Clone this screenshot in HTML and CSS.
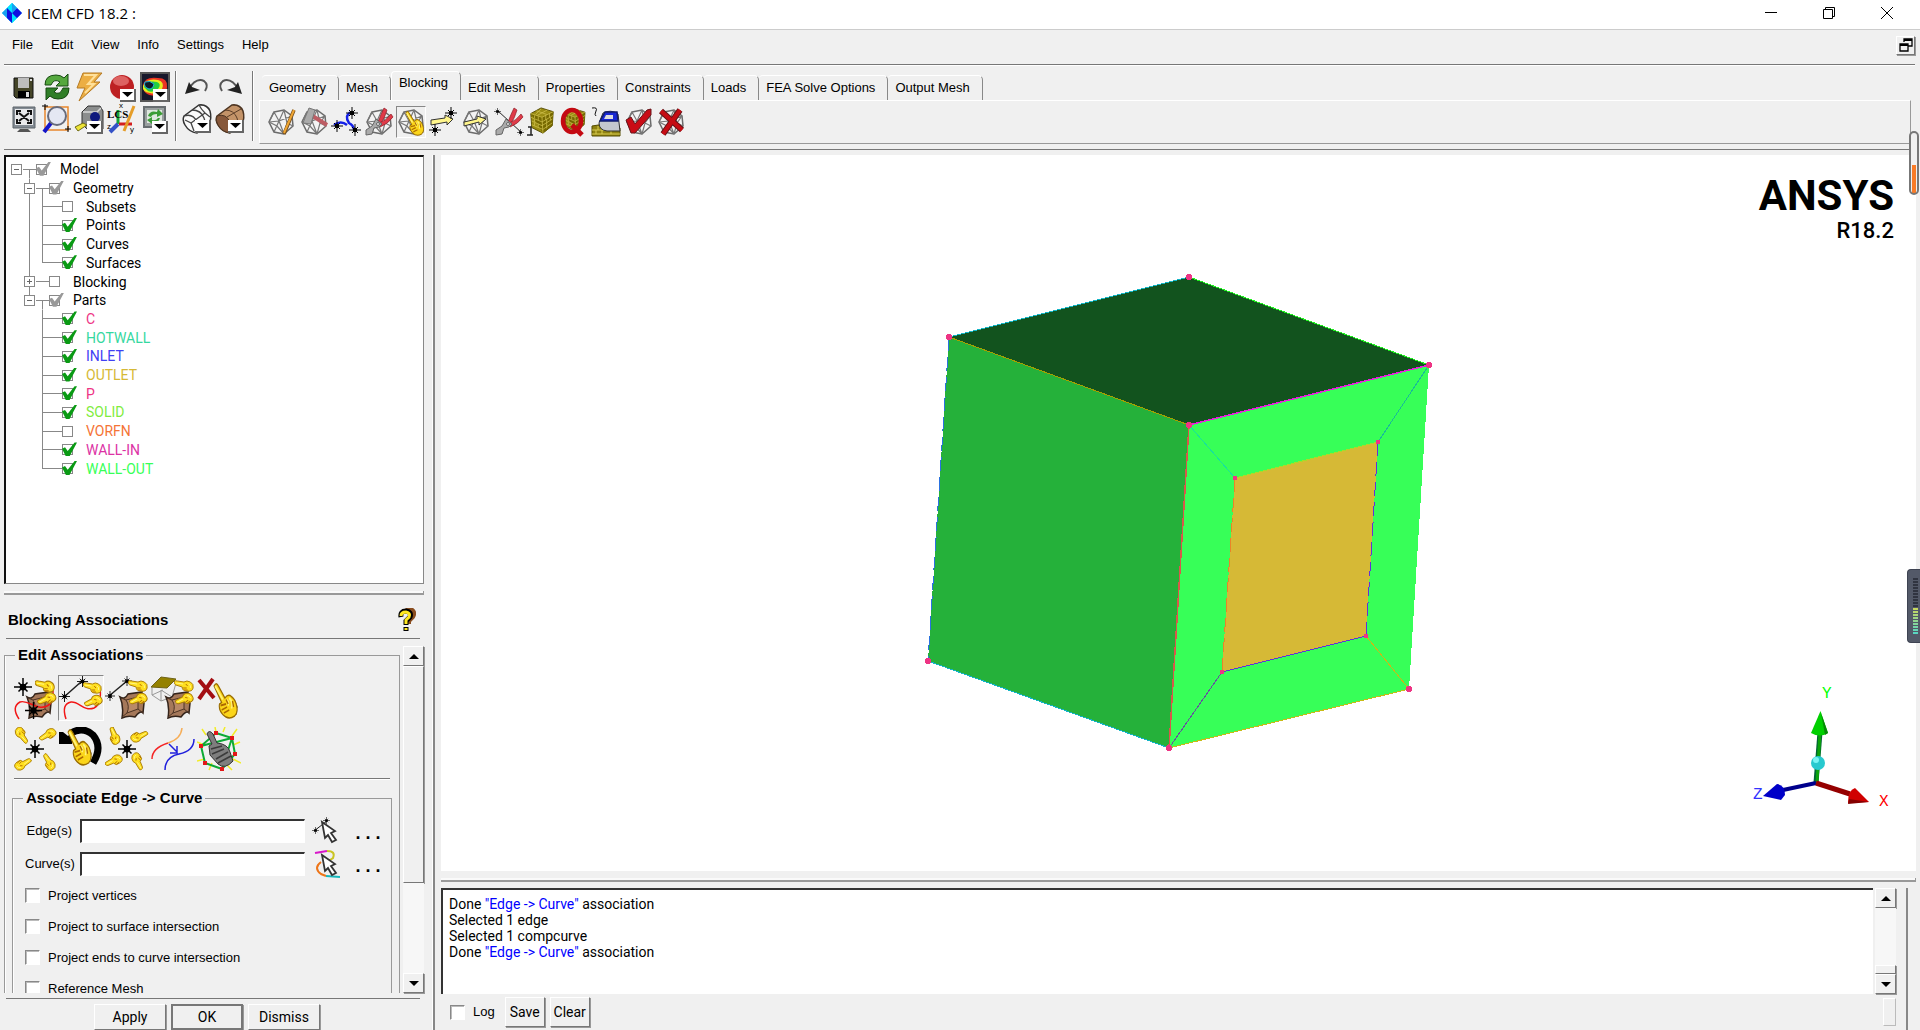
FILE: index.html
```html
<!DOCTYPE html>
<html lang="en">

<head>
	<meta charset="UTF-8">
	<meta name="viewport" content="width=device-width, initial-scale=1.0">
	<title>ICEM CFD 18.2 :</title>
	<link rel="stylesheet" href="styles.css">
</head>

<body>
	<!-- shared icon parts -->
	<svg class="defs" aria-hidden="true">
		<symbol id="ball" viewBox="0 0 30 30">
			<path d="M8 5 18 3 26 9 27 19 18 27 8 25 3 15Z" fill="#f3f3f3" stroke="#6b6b6b" stroke-width="1.5" />
			<path d="M8 5 13 14 18 3M13 14 26 9M13 14 3 15M13 14 8 25M13 14 18 27M18 27 21 16 27 19M21 16 18 3M21 16 26 9M3 15 11 19 18 27M8 5 4 13" fill="none" stroke="#777" stroke-width="1.2" />
		</symbol>
		<symbol id="drop" viewBox="0 0 16 13">
			<path d="M0 0H16V13H0Z" fill="#666" />
			<path d="M0 0H14V11H0Z" fill="#fff" />
			<path d="M2 3H13L7.500 8Z" fill="#000" />
		</symbol>
		<symbol id="star" viewBox="0 0 16 16">
			<path d="M8 0V16M0 8H16M4 4 12 12M12 4 4 12" stroke="#000" stroke-width="1.3" />
			<circle cx="8" cy="8" r="3" />
		</symbol>
		<symbol id="hand" viewBox="0 0 24 24" preserveAspectRatio="none">
			<path d="M9 22 22 21 23 16 20 11 23 18Z" fill="#77705c" />
			<path d="M1 2Q3-1 5 2L11 10Q14 7 17 9Q21 11 22 16Q23 20 20 22Q14 25 9 21Q5 18 6 14L8 13Z" fill="#fbd51a" stroke="#9a6d00" stroke-width="1" />
			<path d="M2 2 9 11M12 11Q15 12 14 15M15 10Q19 13 17 17" fill="none" stroke="#fff27a" stroke-width="1.500" />
			<path d="M7 15 12 14M8 18 13 16M10 20 15 18M12 11 14 14M18 12 19 16" fill="none" stroke="#ad6a00" stroke-width="1.200" />
		</symbol>
		<symbol id="point-left" viewBox="0 0 22 12" preserveAspectRatio="none">
			<path d="M0 2Q1 0 4 1L11 2Q14 0 18 2Q22 4 21 8Q20 12 14 11Q9 11 9 7L2 5Q0 4 0 2Z" fill="#ffdf1e" stroke="#a87a08" />
			<path d="M10 8H14M11 10H15M13 4 15 6" stroke="#b36d00" />
			<path d="M2 3 10 4M16 4Q19 5 18 8" fill="none" stroke="#fff58a" />
		</symbol>
		<symbol id="sheet" viewBox="0 0 28 28">
			<path d="M2 6Q7 9 10 3L24 1Q22 9 26 12L25 22Q22 19 17 26Q10 24 4 27Q6 15 2 6Z" fill="#a5785a" stroke="#33231a" stroke-width="1.500" />
			<path d="M8 9 20 6 20 18 9 22Q12 15 8 9ZM8 9 3 7M20 6 24 2M20 18 25 22M9 22 4 26" fill="#b88968" stroke="#4c3425" />
		</symbol>
		<symbol id="pliers" viewBox="0 0 30 30">
			<path d="M14 15Q17 7 20 1L23 3Q21 10 17 17" fill="#e03a48" stroke="#8b2028" stroke-width=".7" />
			<path d="M15 16Q22 14 27 7L29 10Q24 17 16 20" fill="#e03a48" stroke="#8b2028" stroke-width=".7" />
			<path d="M12 12 18 17 15 20 10 21 8 27 2 28 2 23 8 19Z" fill="#aaa" stroke="#666" />
			<circle cx="14" cy="17" r="1.500" fill="#eee" stroke="#666" />
		</symbol>
		<symbol id="bricks" viewBox="0 0 30 30">
			<path d="M3 7 14 1 27 5 26 20 16 28 4 22Z" fill="#9a8c13" stroke="#544a00" />
			<path d="M3 7 15 11 27 5 26 20 16 28Z" fill="#766900" />
			<path d="M3 7 15 11 27 5M15 11 16 28M3 11 15 16 27 9M4 15 15 20 26 13M4 19 16 24 26 17M7 9V12M11 10V14M7 13V16M11 18V21M7 17V20M19 9V14M23 7V11M20 13V18M24 11V14M20 18V23M9 4 20 8M14 2 8 8M21 3 10 9" fill="none" stroke="#cfc04d" stroke-width=".8" />
		</symbol>
		<symbol id="cursor" viewBox="0 0 18 24">
			<path d="M2 2 15 11 11 13 16 20 12 22 8 15 5 18Z" fill="#fff" stroke="#333" stroke-width="1.800" />
		</symbol>
	</svg>

	<header class="titlebar">
		<svg class="app-logo" width="20" height="20" viewBox="0 0 20 20">
			<path d="M10 0 20 10 10 20 0 10Z" fill="#00c8f0" />
			<path d="M10 0 15 5 10 10 5 5ZM10 10 15 15 10 20 5 15Z" fill="#00e4ff" />
			<path d="M5 5 10 10 5 15ZM15 5 20 10 15 15 10 10ZM10 10 5 15 10 20Z" fill="#1010e0" />
			<path d="M5 5 0 10 5 15ZM15 5 10 0V10Z" fill="#18a0f0" />
		</svg>
		<h1>ICEM CFD 18.2 :</h1>
		<div class="window-buttons">
			<button aria-label="Minimize"><svg width="12" height="12" viewBox="0 0 12 12"><path d="M0 5.500H12" /></svg></button>
			<button aria-label="Restore"><svg width="12" height="12" viewBox="0 0 12 12"><path d="M.5 2.500H9.500V11.500H.5ZM2.500 2.500V.5H11.500V9.500H9.500" /></svg></button>
			<button aria-label="Close"><svg width="12" height="12" viewBox="0 0 12 12"><path d="M0 0 12 12M12 0 0 12" /></svg></button>
		</div>
	</header>

	<nav class="menubar">
		<a href="#">File</a>
		<a href="#">Edit</a>
		<a href="#">View</a>
		<a href="#">Info</a>
		<a href="#">Settings</a>
		<a href="#">Help</a>
		<button class="mdi-button raised" aria-label="Restore view">
			<svg width="14" height="14" viewBox="0 0 14 14"><path d="M5 4V1H13V8H9M1 6H9V13H1Z" fill="none" stroke="#000" stroke-width="1.300" /><path d="M5 2H13M1 7H9" stroke="#000" stroke-width="2" /></svg>
		</button>
	</nav>

	<div class="toolbar">
		<div class="tool-grid five">
			<button aria-label="Save project"><svg viewBox="0 0 30 30"><path d="M5 6H24V26H7L5 24Z" fill="#454528" stroke="#111" /><path d="M9 6H20V16H9Z" fill="#bdbdbd" /><path d="M9 19H21V26H9Z" fill="#000" /><path d="M17 20H20V25H17ZM21 7H23V9H21Z" fill="#ddd" /></svg></button>
			<button aria-label="Update"><svg viewBox="0 0 30 30"><path d="M3 13Q3 3 14 3Q19 3 22 6L26 2V14H14L18 10Q12 6 9 13Z" fill="#55a83e" stroke="#174a12" /><path d="M27 16Q27 27 16 27Q11 27 8 24L4 28V16H16L12 20Q18 24 21 16Z" fill="#2f7e27" stroke="#174a12" /></svg></button>
			<button aria-label="Run"><svg viewBox="0 0 30 30"><path d="M9 1H28L20 10H26L5 29L11 16H3Z" fill="#ecae43" stroke="#b57a24" /><path d="M10 3H22L14 12H20L11 21" fill="none" stroke="#ffe09a" stroke-width="2" /></svg></button>
			<button aria-label="Stop"><svg viewBox="0 0 30 30"><circle cx="15" cy="15" r="12" fill="#bd2023" /><ellipse cx="14" cy="9" rx="8" ry="5" fill="#dd6262" /><use href="#drop" x="13" y="17" width="16" height="13" /></svg></button>
			<button aria-label="Contours"><svg viewBox="0 0 30 30"><path d="M1 1H29V29H1Z" fill="#17172b" stroke="#555" stroke-width="2" /><path d="M3 13Q5 4 18 6Q28 6 27 15Q27 26 15 24Q2 23 3 13Z" fill="#ed3424" /><path d="M3 14Q6 6 18 8Q25 10 22 17Q18 23 10 21Q2 20 3 14Z" fill="#e6ec20" /><path d="M4 15Q7 8 17 10Q22 12 18 17Q13 21 8 19Z" fill="#22cf42" /><path d="M5 10Q10 8 14 12Q13 17 9 17Q3 15 5 10Z" fill="#0c1c28" stroke="#20aee0" /><use href="#drop" x="13" y="17" width="16" height="13" /></svg></button>
			<button aria-label="Fit window"><svg viewBox="0 0 30 30"><path d="M4 3H26V24H4Z" fill="#838b93" stroke="#5d646b" /><path d="M6 5H24V21H6Z" fill="#e9eaec" /><path d="M10 9 20 17M20 9 10 17M8 11V7H12M18 7H22V11M22 15V19H18M12 19H8V15" fill="none" stroke="#111" stroke-width="2" /><path d="M11 25H19L22 28H8Z" fill="#555" /></svg></button>
			<button aria-label="Box zoom"><svg viewBox="0 0 30 30"><path d="M3 3H26V26H3Z" fill="none" stroke="#e8862c" stroke-width="1.500" /><path d="M9 19 2 28" stroke="#1414c8" stroke-width="4" /><circle cx="15" cy="12" r="9" fill="#e4e7f3" stroke="#676b7b" stroke-width="2" /><path d="M0 2H6M3 0V6M23 25H29M26 22V28" stroke="#000" /></svg></button>
			<button aria-label="Measure distance"><svg viewBox="0 0 30 30"><path d="M8 8 14 2H26L29 7V25H13L8 20Z" fill="#8b8d8d" stroke="#333" /><path d="M9 8H23L27 4M23 8V24" fill="none" stroke="#d7d7d7" stroke-width="1.500" /><circle cx="21" cy="13" r="5" fill="#0f197d" /><path d="M1 23 9 19 13 21 4 27Z" fill="#eee536" stroke="#6f6a13" /><use href="#drop" x="13" y="17" width="16" height="13" /></svg></button>
			<button aria-label="Local coordinate systems"><svg viewBox="0 0 30 30"><path d="M11 20V6" stroke="#14a535" stroke-width="3" /><path d="M11 20 3 28" stroke="#3452c7" stroke-width="4" /><path d="M12 20H25" stroke="#d31f1f" stroke-width="3" /><path d="M27 2 17 27" stroke="#e59d28" stroke-width="3" /><text class="lcs" x="0" y="14">LCS</text><text class="axis-mini" x="12" y="4">x</text><text class="axis-mini" x="0" y="25">z</text><text class="axis-mini" x="23" y="28">y</text></svg></button>
			<button aria-label="Refresh view"><svg viewBox="0 0 30 30"><path d="M4 3H25V23H4Z" fill="#9aa0a0" stroke="#676d70" stroke-width="2" /><path d="M7 6H22V19H7Z" fill="#dfe8df" /><path d="M8 12Q10 6 17 8L18 5 23 10 17 13V10Q12 10 11 13ZM20 14Q18 20 12 18V20L7 16 12 13V16Q16 17 18 14Z" fill="#3b9d36" /><use href="#drop" x="12" y="17" width="16" height="13" /></svg></button>
		</div>
		<div class="vline"></div>
		<div class="tool-grid two">
			<button aria-label="Undo"><svg viewBox="0 0 30 30"><path d="M6 18Q14 5 22 9Q27 13 23 19" fill="none" stroke="#555" stroke-width="2" /><path d="M3 22 7 10 10 15 18 18Z" fill="#222" /></svg></button>
			<button aria-label="Redo"><svg viewBox="0 0 30 30"><path d="M24 18Q16 5 8 9Q3 13 7 19" fill="none" stroke="#555" stroke-width="2" /><path d="M27 22 23 10 20 15 12 18Z" fill="#222" /></svg></button>
			<button aria-label="Wireframe"><svg viewBox="0 0 30 30"><path d="M2 12 17 1Q25 0 28 7Q30 14 27 20L15 29Q7 28 3 21Q0 16 2 12Z" fill="#fafafa" stroke="#333" stroke-width="1.500" /><path d="M2 12Q11 9 15 18Q18 24 15 29M10 6Q19 6 22 14Q24 19 22 23M9 19 23 9M17 1Q19 5 23 9L28 13M3 16 9 19 12 27" fill="none" stroke="#444" stroke-width="1.300" /><use href="#drop" x="13" y="16" width="16" height="13" /></svg></button>
			<button aria-label="Solid"><svg viewBox="0 0 30 30"><path d="M2 12 17 1Q25 0 28 7Q30 14 27 20L15 29Q7 28 3 21Q0 16 2 12Z" fill="#c39368" stroke="#4c3421" stroke-width="1.500" /><path d="M2 12Q11 9 15 18Q18 24 15 29Q7 28 3 21Q0 16 2 12Z" fill="#87583a" stroke="#4c3421" /><path d="M10 6Q19 6 22 14L23 18M12 13 26 5" fill="none" stroke="#5b3d27" /><use href="#drop" x="13" y="16" width="16" height="13" /></svg></button>
		</div>
		<div class="vline"></div>
		<div class="notebook">
			<div class="tabs">
				<button>Geometry</button>
				<button>Mesh</button>
				<button class="active">Blocking</button>
				<button>Edit Mesh</button>
				<button>Properties</button>
				<button>Constraints</button>
				<button>Loads</button>
				<button>FEA Solve Options</button>
				<button>Output Mesh</button>
			</div>
			<div class="tab-page">
				<div class="page-tools">
					<button aria-label="Create block"><svg viewBox="0 0 30 30"><use href="#ball" width="30" height="30" /><path d="M28 3 18 27" stroke="#77501f" stroke-width="3.500" /><path d="M28 3 18 26" stroke="#f0a633" stroke-width="2" /></svg></button>
					<button aria-label="Split block"><svg viewBox="0 0 30 30"><use href="#ball" width="30" height="30" /><path d="M12 8 28 18" stroke="#bd5d64" stroke-width="4" /><path d="M10 1 16 3 12 17 4 16Z" fill="#aaa" stroke="#777" /></svg></button>
					<button aria-label="Merge vertices"><svg viewBox="0 0 30 30"><path d="M20 5Q13 9 18 16Q22 18 23 22M3 18Q10 13 16 18" fill="none" stroke="#1420e8" stroke-width="2.500" /><use href="#star" x="15" y="0" width="12" height="12" /><use href="#star" x="0" y="13" width="12" height="12" /><use href="#star" x="18" y="17" width="12" height="12" /></svg></button>
					<button aria-label="Edit block"><svg viewBox="0 0 30 30"><use href="#ball" width="30" height="30" /><use href="#pliers" width="30" height="30" /></svg></button>
					<button class="pressed" aria-label="Associate"><svg viewBox="0 0 30 30"><use href="#ball" width="30" height="30" /><use href="#hand" x="9" y="4" width="20" height="25" /></svg></button>
					<button aria-label="Move vertex"><svg viewBox="0 0 30 30"><path d="M2 13 16 11V8L24 12 18 18V15L2 18Z" fill="#fff58b" stroke="#333" /><use href="#star" x="16" y="0" width="12" height="12" /><use href="#star" x="0" y="17" width="12" height="12" /></svg></button>
					<button aria-label="Transform blocks"><svg viewBox="0 0 30 30"><use href="#ball" width="30" height="30" /><path d="M3 15 16 12V9L25 12 18 18V15L3 19Z" fill="#fff58b" stroke="#333" /></svg></button>
					<button aria-label="Edit edge"><svg viewBox="0 0 30 30"><path d="M4 4 28 26" stroke="#222" /><use href="#star" x="0" y="1" width="7" height="7" /><use href="#star" x="23" y="22" width="7" height="7" /><use href="#pliers" width="30" height="30" /></svg></button>
					<button aria-label="Pre-mesh params"><svg viewBox="0 0 30 30"><use href="#bricks" x="2" width="28" height="28" /><path d="M2 20H5V28M1 28H7" fill="none" stroke="#222" stroke-width="1.500" /></svg></button>
					<button aria-label="Pre-mesh quality"><svg viewBox="0 0 30 30"><use href="#bricks" x="3" y="1" width="26" height="25" /><ellipse cx="13" cy="14" rx="9" ry="11" fill="none" stroke="#c40912" stroke-width="4.500" /><path d="M13 18 23 28" stroke="#c40912" stroke-width="5" /></svg></button>
					<button aria-label="Pre-mesh smooth"><svg viewBox="0 0 30 30"><path d="M1 19 20 16 29 21V29H1Z" fill="#8f8210" stroke="#554c00" /><path d="M1 23H29M1 27H29M7 19V23M14 19V23M11 23V27M20 23V27M5 23V27" stroke="#d7ca51" /><path d="M8 16 12 6Q20 2 27 7L29 24H16Q8 23 8 16Z" fill="#c4c7ce" stroke="#333" /><path d="M9 14 14 5H26L27 14Z" fill="#1928d4" stroke="#111b6c" stroke-width="1.500" /><path d="M15 8H22V12H13Z" fill="#ddd" /><path d="M1 1Q7 0 5 4T5 9" fill="none" stroke="#111" /></svg></button>
					<button aria-label="Check blocks"><svg viewBox="0 0 30 30"><use href="#ball" width="30" height="30" /><path d="M2 13 7 10 11 17 23 3 27 2V8L11 26H7Z" fill="#c90c16" stroke="#66151a" /></svg></button>
					<button aria-label="Delete block"><svg viewBox="0 0 30 30"><use href="#ball" width="30" height="30" /><path d="M5 4 26 23M24 3 7 27" stroke="#641419" stroke-width="6" /><path d="M5 4 26 23M24 3 7 27" stroke="#c60c14" stroke-width="4" /></svg></button>
				</div>
			</div>
		</div>
	</div>

	<main class="workspace">
		<aside class="side">
			<div class="tree-box">
				<ul class="tree">
					<li><i><button class="exp" aria-label="Collapse Model"></button></i><i class="down"></i><input type="checkbox" class="partial" id="t0" checked><label for="t0">Model</label></li>
					<li><i></i><i class="v"><button class="exp" aria-label="Collapse Geometry"></button></i><i class="down"></i><input type="checkbox" class="partial" id="t1" checked><label for="t1">Geometry</label></li>
					<li><i></i><i class="v"></i><i class="tee"></i><i class="h"></i><input type="checkbox" id="t2"><label for="t2">Subsets</label></li>
					<li><i></i><i class="v"></i><i class="tee"></i><i class="h"></i><input type="checkbox" id="t3" checked><label for="t3">Points</label></li>
					<li><i></i><i class="v"></i><i class="tee"></i><i class="h"></i><input type="checkbox" id="t4" checked><label for="t4">Curves</label></li>
					<li><i></i><i class="v"></i><i class="end"></i><i class="h"></i><input type="checkbox" id="t5" checked><label for="t5">Surfaces</label></li>
					<li><i></i><i class="v"><button class="exp plus" aria-label="Expand Blocking"></button></i><i class="h"></i><input type="checkbox" id="t6"><label for="t6">Blocking</label></li>
					<li><i></i><i class="up"><button class="exp" aria-label="Collapse Parts"></button></i><i class="down"></i><input type="checkbox" class="partial" id="t7" checked><label for="t7">Parts</label></li>
					<li><i></i><i></i><i class="tee"></i><i class="h"></i><input type="checkbox" id="p0" checked><label for="p0" class="pink">C</label></li>
					<li><i></i><i></i><i class="tee"></i><i class="h"></i><input type="checkbox" id="p1" checked><label for="p1" class="teal">HOTWALL</label></li>
					<li><i></i><i></i><i class="tee"></i><i class="h"></i><input type="checkbox" id="p2" checked><label for="p2" class="blue">INLET</label></li>
					<li><i></i><i></i><i class="tee"></i><i class="h"></i><input type="checkbox" id="p3" checked><label for="p3" class="gold">OUTLET</label></li>
					<li><i></i><i></i><i class="tee"></i><i class="h"></i><input type="checkbox" id="p4" checked><label for="p4" class="pink">P</label></li>
					<li><i></i><i></i><i class="tee"></i><i class="h"></i><input type="checkbox" id="p5" checked><label for="p5" class="lime">SOLID</label></li>
					<li><i></i><i></i><i class="tee"></i><i class="h"></i><input type="checkbox" id="p6"><label for="p6" class="orange">VORFN</label></li>
					<li><i></i><i></i><i class="tee"></i><i class="h"></i><input type="checkbox" id="p7" checked><label for="p7" class="magenta">WALL-IN</label></li>
					<li><i></i><i></i><i class="end"></i><i class="h"></i><input type="checkbox" id="p8" checked><label for="p8" class="green">WALL-OUT</label></li>
				</ul>
			</div>
			<div class="sash"></div>
			<section class="options">
				<header class="options-head">
					<h2>Blocking Associations</h2>
					<button aria-label="Help"><svg width="18" height="24" viewBox="0 0 18 24"><path d="M6 5Q8 1 13 1Q18 4 15 9L11 13V16" fill="none" stroke="#8a4d20" stroke-width="4" /><path d="M3 9Q2 3 8 3Q14 4 12 9L8 13V17M8 19V23" fill="none" stroke="#000" stroke-width="5" /><path d="M3 8Q3 4 8 4Q13 5 11 9L8 12V16M8 20V22" fill="none" stroke="#ffe820" stroke-width="3" /></svg></button>
				</header>
				<div class="options-scroll">
					<div class="options-body">
						<fieldset class="outer">
							<legend>Edit Associations</legend>
							<div class="assoc-grid">
								<button aria-label="Associate vertex"><svg viewBox="0 0 44 44"><use href="#sheet" x="12" y="15" width="28" height="28" /><path d="M6 43Q-2 31 7 26C15 23 24 35 34 30Q41 27 40 15" fill="none" stroke="#f21616" stroke-width="1.500" /><use href="#star" x="1" y="2" width="18" height="18" /><use href="#star" x="12" y="26" width="17" height="17" /><use href="#point-left" x="22" y="4" width="20" height="13" /><use href="#point-left" x="25" y="18" width="19" height="12" transform="rotate(-38 34 24)" /></svg></button>
								<button class="pressed" aria-label="Associate edge to curve"><svg viewBox="0 0 44 44"><path d="M5 21 23 5" stroke="#222" stroke-width="1.500" /><path d="M7 43Q2 28 12 26C20 25 25 36 35 32Q43 28 41 12" fill="none" stroke="#f21616" stroke-width="1.500" /><use href="#star" x="0" y="15" width="11" height="11" /><use href="#star" x="18" y="0" width="11" height="11" /><use href="#point-left" x="24" y="6" width="19" height="12" /><use href="#point-left" x="26" y="20" width="18" height="12" transform="rotate(-38 35 26)" /></svg></button>
								<button aria-label="Associate edge to surface"><svg viewBox="0 0 44 44"><path d="M4 20 22 5" stroke="#222" stroke-width="1.500" /><use href="#sheet" x="13" y="15" width="28" height="28" /><use href="#star" x="0" y="15" width="10" height="10" /><use href="#star" x="17" y="0" width="10" height="10" /><use href="#point-left" x="23" y="4" width="20" height="12" /><use href="#point-left" x="25" y="18" width="18" height="12" transform="rotate(-38 34 24)" /></svg></button>
								<button aria-label="Associate face to surface"><svg viewBox="0 0 44 44"><path d="M1 11V19L10 25 21 21 25 7M10 25V14L21 21M1 19 12 14" fill="none" stroke="#999" /><path d="M0 11 10 1 25 3 16 12Z" fill="#948100" stroke="#6f6317" /><use href="#sheet" x="13" y="15" width="28" height="28" /><use href="#point-left" x="23" y="4" width="20" height="12" /><use href="#point-left" x="25" y="18" width="18" height="12" transform="rotate(-38 34 24)" /></svg></button>
								<button aria-label="Disassociate"><svg viewBox="0 0 44 44"><path d="M2 4 17 22M16 3 2 23" stroke="#a30e12" stroke-width="4" /><use href="#hand" x="16" y="7" width="26" height="36" /></svg></button>
								<button aria-label="Update associations"><svg viewBox="0 0 44 44"><use href="#star" x="13" y="13" width="18" height="18" /><use href="#point-left" x="26" y="30" width="18" height="11" transform="rotate(45 35 36)" /><use href="#point-left" x="26" y="3" width="18" height="11" transform="rotate(-45 35 8)" /><use href="#point-left" x="0" y="3" width="18" height="11" transform="rotate(-140 9 8)" /><use href="#point-left" x="0" y="30" width="18" height="11" transform="rotate(135 9 36)" /></svg></button>
								<button aria-label="Reset association"><svg viewBox="0 0 44 44"><path d="M12 6Q24-1 34 8Q44 20 34 36" fill="none" stroke="#000" stroke-width="7" /><path d="M0 5H4L9 9 13 5V17H0Z" /><use href="#hand" x="8" y="2" width="26" height="37" /></svg></button>
								<button aria-label="Snap project vertices"><svg viewBox="0 0 44 44"><use href="#star" x="13" y="13" width="18" height="18" /><use href="#point-left" x="0" y="4" width="18" height="11" transform="rotate(55 9 9)" /><use href="#point-left" x="25" y="4" width="18" height="11" transform="rotate(140 34 9)" /><use href="#point-left" x="0" y="29" width="18" height="11" transform="rotate(-40 9 34)" /><use href="#point-left" x="24" y="29" width="18" height="11" transform="rotate(-130 33 34)" /></svg></button>
								<button aria-label="Group curves"><svg viewBox="0 0 44 44"><path d="M1 32Q1 21 17 16" fill="none" stroke="#f42525" stroke-width="1.500" /><path d="M17 16Q30 12 31 1" fill="none" stroke="#f6ae58" stroke-width="1.500" /><path d="M14 43Q14 30 28 27Q43 24 43 12M18 17 26 25M26 19V26H19" fill="none" stroke="#2020dc" stroke-width="1.500" /></svg></button>
								<button aria-label="Auto association"><svg viewBox="0 0 44 44"><path d="M5 2 9 8M18 0 19 5M28 0 26 5M40 2 35 9M43 15 36 18M44 36 36 32M35 43 30 38M12 43 15 36M0 34 8 32M0 15 7 18" stroke="#f2ed27" stroke-width="1.500" /><path d="M19 6 35 11 38 27 25 42 8 36 4 19ZM4 19 35 11 25 42" fill="none" stroke="#0caa35" stroke-width="2" /><path d="M10 7Q12 2 16 7L20 16Q31 17 33 25L36 34Q28 43 21 37L13 28 12 19 15 17Z" fill="#7e7e7e" stroke="#333" /><path d="M14 22 25 19M15 27 27 22M19 32 31 25M21 36 34 29" stroke="#3b3b3b" stroke-width="1.500" /><path d="M17 4H21V8H17ZM33 9H37V13H33ZM2 17H6V21H2ZM36 25H40V29H36ZM23 40H27V44H23ZM6 34H10V38H6Z" fill="#e31818" /></svg></button>
							</div>
							<hr>
							<fieldset class="inner">
								<legend>Associate Edge -&gt; Curve</legend>
								<div class="field">
									<label for="edges">Edge(s)</label>
									<input type="text" id="edges">
									<button class="pick" aria-label="Select edges"><svg width="28" height="30" viewBox="0 0 28 30"><path d="M2 15 15 5" stroke="#222" /><use href="#star" x="0" y="11" width="7" height="7" /><use href="#star" x="11" y="1" width="7" height="7" /><use href="#cursor" x="8" y="4" width="18" height="24" /></svg></button>
									<button class="more" aria-label="More edges">. . .</button>
								</div>
								<div class="field">
									<label for="curves">Curve(s)</label>
									<input type="text" id="curves">
									<button class="pick" aria-label="Select curves"><svg width="28" height="30" viewBox="0 0 28 30"><path d="M3 4 15 2" stroke="#d818c9" stroke-width="2" /><path d="M15 2Q24 2 21 9L15 13" fill="none" stroke="#cac423" stroke-width="2" /><path d="M9 13Q1 19 9 25L14 27" fill="none" stroke="#ed7519" stroke-width="2" /><path d="M14 27 28 28" stroke="#16b8bc" stroke-width="2" /><use href="#cursor" x="8" y="4" width="18" height="24" /></svg></button>
									<button class="more" aria-label="More curves">. . .</button>
								</div>
								<label class="check"><input type="checkbox">Project vertices</label>
								<label class="check"><input type="checkbox">Project to surface intersection</label>
								<label class="check"><input type="checkbox">Project ends to curve intersection</label>
								<label class="check"><input type="checkbox">Reference Mesh</label>
							</fieldset>
						</fieldset>
					</div>
					<div class="scrollbar">
						<button class="arrow raised up" aria-label="Scroll up"></button>
						<div class="thumb raised"></div>
						<div class="trough"></div>
						<button class="arrow raised" aria-label="Scroll down"></button>
					</div>
				</div>
				<footer class="actions">
					<button class="raised">Apply</button>
					<button class="raised default">OK</button>
					<button class="raised">Dismiss</button>
				</footer>
			</section>
		</aside>
		<div class="split"></div>
		<section class="main">
			<div class="viewport">
				<svg class="model" width="514" height="486" viewBox="922 270 514 486" shape-rendering="crispEdges">
					<path d="M949 337 1189 277 1429 365 1189 425Z" fill="#12531e" />
					<path d="M949 337 1189 425 1169 748 928 661Z" fill="#25b13a" />
					<path d="M1189 425 1429 365 1409 689 1169 748Z" fill="#37ff58" />
					<path d="M1235 478 1378 442 1366 636 1222 672Z" fill="#d6b936" />
					<g fill="none" stroke-width="1">
						<path d="M949 337 1189 277M928 661 1169 748" stroke="#13b5c5" />
						<path d="M1189 277 1429 365" stroke="#20ee20" />
						<path d="M949 337 1189 425" stroke="#a4a000" />
						<path d="M1189 425 1429 365" stroke="#e81ee0" stroke-width="1.500" />
						<path d="M949 337 928 661" stroke="#2a72e0" stroke-dasharray="14 6" />
						<path d="M1189 425 1169 748" stroke="#d8584a" stroke-width="1.500" />
						<path d="M1169 748 1409 689M1366 636 1409 689" stroke="#c8bb16" />
						<path d="M1189 425 1235 478" stroke="#18e39a" />
						<path d="M1429 365 1378 442" stroke="#17bc98" />
						<path d="M1235 478 1378 442" stroke="#a9dc28" />
						<path d="M1235 478 1222 672" stroke="#ec8228" stroke-dasharray="14 6" />
						<path d="M1378 442 1366 636" stroke="#6330d8" stroke-dasharray="14 6" />
						<path d="M1366 636 1222 672" stroke="#6330d8" />
						<path d="M1222 672 1169 748" stroke="#6550a0" />
					</g>
					<g fill="#ee3484">
						<circle cx="1189" cy="277" r="3" /><circle cx="949" cy="337" r="3" />
						<circle cx="1189" cy="425" r="3" /><circle cx="1429" cy="365" r="3" />
						<circle cx="928" cy="661" r="3" /><circle cx="1169" cy="748" r="3" />
						<circle cx="1409" cy="689" r="3" /><circle cx="1235" cy="478" r="2.500" />
						<circle cx="1378" cy="442" r="2.500" /><circle cx="1366" cy="636" r="2.500" />
						<circle cx="1222" cy="672" r="2.500" />
					</g>
				</svg>
				<div class="brand">
					<strong>ANSYS</strong>
					<span>R18.2</span>
				</div>
				<svg class="triad" width="146" height="132" viewBox="1750 680 146 132">
					<path d="M1816 783 1820 732" stroke="#063" stroke-width="5" />
					<path d="M1817 783 1820 732" stroke="#0ba30b" stroke-width="3" />
					<path d="M1820.500 711 1828 733Q1820 738 1811 733Z" fill="#00d000" />
					<path d="M1821 713 1825 735 1828 733Z" fill="#088908" />
					<path d="M1816 783 1783 790" stroke="#00008c" stroke-width="4" />
					<path d="M1763 796 1777 784Q1785 785 1785 795L1781 800Z" fill="#0000c8" />
					<path d="M1816 783 1850 794" stroke="#950000" stroke-width="5" />
					<path d="M1869 802 1855 788Q1848 790 1848 803Z" fill="#d00000" />
					<path d="M1869 802 1848 804 1849 799Z" fill="#850000" />
					<circle cx="1818" cy="763" r="7" fill="#28c9cf" />
					<circle cx="1816" cy="760" r="3" fill="#79f4f4" />
					<text x="1822" y="698" fill="#0f0">Y</text>
					<text x="1753" y="799" fill="#33f">Z</text>
					<text x="1879" y="806" fill="#f00">X</text>
				</svg>
			</div>
			<div class="sash"></div>
			<div class="messages">
				<div class="message-col">
					<div class="log">
						<p>Done <span>"Edge -&gt; Curve"</span> association</p>
						<p>Selected 1 edge</p>
						<p>Selected 1 compcurve</p>
						<p>Done <span>"Edge -&gt; Curve"</span> association</p>
					</div>
					<div class="scrollbar">
						<button class="arrow raised up" aria-label="Scroll log up"></button>
						<div class="trough"></div>
						<div class="thumb raised"></div>
						<button class="arrow raised" aria-label="Scroll log down"></button>
					</div>
				</div>
				<div class="log-actions">
					<label class="check"><input type="checkbox">Log</label>
					<button class="raised">Save</button>
					<button class="raised">Clear</button>
					<div class="grip"></div>
				</div>
			</div>
		</section>
	</main>

	<div class="gauge"></div>
	<div class="meter"></div>
</body>

</html>
```

FILE: styles.css
```css
* {
	box-sizing: border-box;
}

body {
	display: flex;
	flex-direction: column;
	height: 100vh;
	margin: 0;
	overflow: hidden;
	background-color: #f0f0f0;
	color: #000;
	font: 14px/18px Roboto, "Liberation Sans", sans-serif;
}

button {
	display: flex;
	align-items: center;
	justify-content: center;
	padding: 0;
	border: 0;
	background: none;
	color: inherit;
	font: inherit;
}

h1,
h2,
p,
ul {
	margin: 0;
	padding: 0;
	font-weight: normal;
}

.defs {
	position: absolute;
	width: 0;
	height: 0;
}

.raised {
	border: 1px solid;
	border-color: #fff #777 #777 #fff;
	box-shadow: 1px 1px 0 #999;
}

/* title bar and menu */

.titlebar {
	display: flex;
	align-items: center;
	flex: none;
	height: 30px;
	padding: 0 4px 3px 2px;
	border-bottom: 1px solid #ccc;
	background-color: #fff;
}

.titlebar h1 {
	margin-left: 5px;
	font: 15px/20px "Open Sans", sans-serif;
}

.window-buttons {
	display: flex;
	margin-left: auto;
}

.window-buttons button {
	width: 58px;
	height: 26px;
}

.window-buttons path {
	fill: none;
	stroke: #000;
}

.menubar {
	display: flex;
	align-items: center;
	flex: none;
	gap: 18px;
	height: 35px;
	margin: 0 5px 0 4px;
	padding: 0 0 4px 8px;
	border-bottom: 1px solid #777;
	box-shadow: 0 1px 0 #fff;
	font: 13px/18px "Liberation Sans", sans-serif;
}

.menubar a {
	color: inherit;
	text-decoration: none;
}

.mdi-button {
	width: 19px;
	height: 19px;
	margin-left: auto;
}

/* toolbar */

.toolbar {
	display: flex;
	flex: none;
	height: 85px;
	margin: 0 5px 0 4px;
	padding: 6px 4px 0;
	border-bottom: 1px solid #777;
}

.tool-grid {
	display: grid;
	grid-auto-rows: 32px;
}

.tool-grid.five {
	grid-template-columns: repeat(5, 1fr);
	width: 163px;
	margin-right: 4px;
}

.tool-grid.two {
	grid-template-columns: repeat(2, 33px);
	margin: 0 6px 0 3px;
}

.tool-grid svg,
.tab-page svg {
	flex: none;
	width: 30px;
	height: 30px;
	overflow: visible;
}

.lcs {
	font: bold 11px "Liberation Serif", serif;
}

.axis-mini {
	font: 8px "Liberation Sans", sans-serif;
}

.vline {
	width: 2px;
	height: 70px;
	border-left: 1px solid #777;
	border-right: 1px solid #fff;
}

.notebook {
	display: flex;
	flex: 1;
	flex-direction: column;
	margin-left: 5px;
}

.tabs {
	display: flex;
	align-items: flex-end;
	height: 29px;
	padding-left: 3px;
	font: 13px/18px "Liberation Sans", sans-serif;
}

.tabs button {
	height: 25px;
	padding: 0 12px 0 7px;
	border-top: 1px solid #fff;
	border-right: 1px solid #888;
	border-radius: 4px 5px 0 0;
}

.tabs .active {
	height: 29px;
	padding-bottom: 7px;
	border-left: 1px solid #fff;
}

.tab-page {
	display: flex;
	align-items: center;
	height: 44px;
	padding-left: 6px;
	border: 1px solid;
	border-color: #fff #999 #999 #fff;
}

.page-tools {
	display: flex;
	justify-content: space-between;
	width: 420px;
}

.page-tools button {
	width: 30px;
	height: 32px;
}

.pressed {
	border: 1px solid;
	border-color: #888 #fff #fff #888;
}

/* left side */

.workspace {
	display: flex;
	flex: 1;
	min-height: 0;
	padding: 5px 4px 0;
}

.side {
	display: flex;
	flex: none;
	flex-direction: column;
	width: 420px;
}

.tree-box {
	flex: 1;
	min-height: 0;
	padding: 3px 4px;
	border: 1px solid #888;
	border-top: 2px solid #111;
	border-left: 2px solid #111;
	background-color: #fff;
}

.tree {
	display: flex;
	flex-direction: column;
	height: 318px;
	list-style: none;
}

.tree li {
	display: flex;
	flex: 1;
	align-items: center;
}

.tree i {
	display: flex;
	align-items: center;
	justify-content: center;
	align-self: stretch;
	width: 13px;
	background-repeat: no-repeat;
}

.tree .v {
	background: linear-gradient(#888, #888) 6px 0 / 1px 100% no-repeat;
}

.tree .h {
	background: linear-gradient(#888, #888) 0 50% / 100% 1px no-repeat;
}

.tree .up {
	background: linear-gradient(#888, #888) 6px 0 / 1px 50% no-repeat;
}

.tree .down {
	background: linear-gradient(#888, #888) 0 50% / 100% 1px no-repeat, linear-gradient(#888, #888) 6px 100% / 1px 50% no-repeat;
}

.tree .tee {
	background: linear-gradient(#888, #888) 6px 0 / 1px 100% no-repeat, linear-gradient(#888, #888) 6px 50% / 7px 1px no-repeat;
}

.tree .end {
	background: linear-gradient(#888, #888) 6px 0 / 1px 50% no-repeat, linear-gradient(#888, #888) 6px 50% / 7px 1px no-repeat;
}

.tree .exp {
	flex: none;
	width: 11px;
	height: 11px;
	border: 1px solid #888;
	background: linear-gradient(#666, #666) 50% 50% / 5px 1px no-repeat #fff;
}

.tree .plus {
	background: linear-gradient(#666, #666) 50% 50% / 5px 1px no-repeat, linear-gradient(#666, #666) 50% 50% / 1px 5px no-repeat #fff;
}

.tree input {
	position: relative;
	appearance: none;
	width: 11px;
	height: 11px;
	margin: 0 13px 0 0;
	border: 1px solid #888;
	background-color: #fff;
}

.tree input:checked::after {
	content: "";
	position: absolute;
	top: -3px;
	left: -1px;
	width: 15px;
	height: 14px;
	background-color: #0a9a14;
	clip-path: polygon(0 45%, 20% 35%, 38% 62%, 84% 0, 100% 0, 50% 100%, 26% 100%);
}

.tree .partial:checked::after {
	background-color: #999;
}

.pink { color: #ee3484; }
.teal { color: #35d8a0; }
.blue { color: #4040f4; }
.gold { color: #d6b936; }
.lime { color: #80ec40; }
.orange { color: #f57436; }
.magenta { color: #dc32a4; }
.green { color: #37ff58; }

.sash {
	flex: none;
	height: 4px;
	margin: 7px 0 6px;
	border: 1px solid #999;
	border-width: 0 1px 2px 0;
	background-color: #fafafa;
}

.options {
	display: flex;
	flex: none;
	flex-direction: column;
	height: 429px;
}

.options-head {
	display: flex;
	align-items: center;
	justify-content: space-between;
	height: 38px;
	margin: 0 4px 7px 2px;
	padding: 0 4px 0 2px;
	border-bottom: 1px solid #777;
}

.options-head h2,
legend {
	font: bold 15px/18px "Liberation Sans", sans-serif;
}

.options-scroll {
	display: flex;
	flex: 1;
	gap: 3px;
	min-height: 0;
}

.options-body {
	flex: 1;
	overflow: hidden;
}

fieldset {
	min-width: 0;
	margin: 0;
	border: 1px solid #999;
	box-shadow: inset 1px 0 0 #fff;
}

legend {
	padding: 0 3px;
}

.outer {
	height: 420px;
	padding: 11px 7px 0;
}

.outer > legend {
	margin-left: 3px;
}

.assoc-grid {
	display: grid;
	grid-template-columns: repeat(5, 46px);
	grid-auto-rows: 46px;
	row-gap: 5px;
}

.assoc-grid svg {
	flex: none;
	width: 44px;
	height: 44px;
}

hr {
	margin: 6px 2px 9px;
	border: 0;
	border-top: 1px solid #777;
	border-bottom: 1px solid #fff;
}

.inner {
	height: 240px;
	padding: 7px 9px 0 12px;
}

.inner > legend {
	margin-left: -2px;
}

.field {
	display: flex;
	align-items: center;
	height: 33px;
}

.field label {
	width: 47px;
	text-align: right;
	font: 13px/18px "Liberation Sans", sans-serif;
}

.field input {
	flex: 1;
	min-width: 0;
	height: 24px;
	margin-left: 8px;
	border: 1px solid #fff;
	border-top: 2px solid #333;
	border-left: 2px solid #333;
	background-color: #fff;
}

.pick {
	width: 28px;
	margin-left: 7px;
}

.more {
	width: 28px;
	margin-left: 14px;
	padding-top: 4px;
	font: bold 18px/18px "Liberation Sans", sans-serif;
}

.check {
	display: flex;
	align-items: center;
	gap: 8px;
	height: 31px;
	font: 13px/18px "Liberation Sans", sans-serif;
}

.check input {
	appearance: none;
	width: 15px;
	height: 15px;
	margin: 0;
	border: 1px solid;
	border-color: #888 #fff #fff #888;
	background-color: #fff;
	box-shadow: inset 1px 1px 0 #bbb;
}

.scrollbar {
	display: flex;
	flex: none;
	flex-direction: column;
	width: 21px;
}

.arrow {
	flex: none;
	height: 20px;
}

.arrow::before {
	content: "";
	border: 5px solid transparent;
	border-top-color: #000;
	border-bottom: 0;
}

.arrow.up::before {
	border-top: 0;
	border-bottom: 5px solid #000;
}

.trough {
	flex: 1;
	background-color: #f7f7f7;
}

.options .thumb {
	flex: none;
	height: 217px;
}

.messages .thumb {
	height: 9px;
}

.actions {
	display: flex;
	gap: 5px;
	height: 32px;
	margin: 5px 4px 0 2px;
	padding: 5px 0 0 88px;
	border-top: 1px solid #777;
}

.actions button {
	width: 72px;
	height: 26px;
}

.actions .default {
	border: 2px solid #777;
}

/* right side */

.split {
	width: 3px;
	margin: 0 6px 0 8px;
	border-right: 2px solid #888;
	background-color: #fff;
}

.main {
	display: flex;
	flex: 1;
	flex-direction: column;
	min-width: 0;
}

.viewport {
	position: relative;
	display: flex;
	flex: 1;
	align-items: center;
	justify-content: center;
	min-height: 0;
	background-color: #fff;
}

.brand {
	position: absolute;
	top: 17px;
	right: 22px;
	display: flex;
	flex-direction: column;
	align-items: flex-end;
}

.brand strong {
	font: bold 42px/48px Roboto, sans-serif;
}

.brand span {
	font: 500 22px/22px Roboto, sans-serif;
}

.triad {
	position: absolute;
	right: 20px;
	bottom: 59px;
}

.triad text {
	font: 16px "Liberation Mono", monospace;
}

.messages {
	display: flex;
	flex: none;
	flex-direction: column;
	height: 142px;
	margin-right: 8px;
	padding-right: 10px;
	border-right: 2px solid #888;
}

.message-col {
	display: flex;
	gap: 2px;
	height: 106px;
}

.log {
	flex: 1;
	padding: 6px;
	border-top: 2px solid #333;
	border-left: 2px solid #333;
	background-color: #fff;
	line-height: 16px;
}

.log span {
	color: #00f;
}

.log-actions {
	display: flex;
	align-items: center;
	gap: 5px;
	height: 36px;
	padding-left: 9px;
}

.log-actions .check {
	margin-right: 5px;
}

.log-actions button {
	width: 40px;
	height: 30px;
}

.grip {
	width: 13px;
	height: 28px;
	margin-left: auto;
	border: 1px solid;
	border-color: #fff #bbb #bbb #fff;
}

/* floating desktop gadgets at the right edge */

.gauge {
	position: absolute;
	top: 131px;
	right: 1px;
	width: 10px;
	height: 64px;
	border: 2px solid #777;
	border-radius: 5px;
	background: linear-gradient(#f97b27, #f97b27) 50% 100% / 4px 28px no-repeat #f0f0f0;
}

.meter {
	position: absolute;
	top: 569px;
	right: 0;
	width: 13px;
	height: 74px;
	padding: 8px 2px 8px 5px;
	border: 1px solid #3e4352;
	border-right: 0;
	border-radius: 4px 0 0 4px;
	background-color: #535968;
}

.meter::before {
	content: "";
	display: block;
	height: 56px;
	background: repeating-linear-gradient(transparent 0 2px, #535968 2px 3px), linear-gradient(#303440 30px, #cbd85c 30px, #55d6c4);
}
```
